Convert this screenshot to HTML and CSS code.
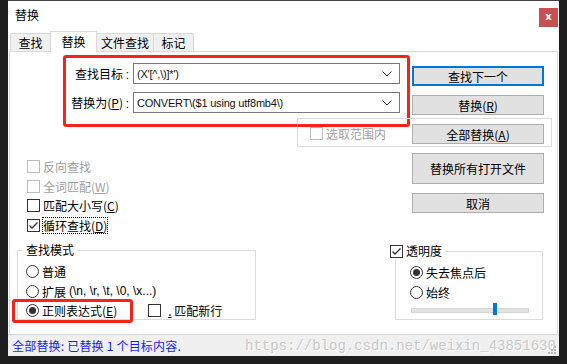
FILE: index.html
```html
<!DOCTYPE html>
<html lang="zh-CN">
<head>
    <meta charset="UTF-8">
    <title>替换</title>
    <link rel="stylesheet" href="styles.css">
</head>
<body>
    <div class="window">
        <div class="title-bar">
            <span class="title">替换</span>
            <span class="close-btn">x</span>
        </div>

        <div class="tabs">
            <span class="tab w40">查找</span>
            <span class="tab active w46">替换</span>
            <span class="tab w57">文件查找</span>
            <span class="tab w40">标记</span>
        </div>

        <div class="panel">
            <div class="left-top">
                <div class="highlight fields">
                    <div class="field-row">
                        <label class="field-label">查找目标 <span class="colon">:</span></label>
                        <div class="combo">
                            <span class="combo-text">(X'[^,\)]*')</span>
                            <svg class="chevron" width="10" height="6" viewBox="0 0 10 6"><polyline points="0.5,0.5 5,5 9.5,0.5" fill="none" stroke="#333" stroke-width="1"/></svg>
                        </div>
                    </div>
                    <div class="field-row">
                        <label class="field-label">替换为(<u>P</u>) <span class="colon">:</span></label>
                        <div class="combo">
                            <span class="combo-text">CONVERT\($1 using utf8mb4\)</span>
                            <svg class="chevron" width="10" height="6" viewBox="0 0 10 6"><polyline points="0.5,0.5 5,5 9.5,0.5" fill="none" stroke="#333" stroke-width="1"/></svg>
                        </div>
                    </div>
                </div>

                <div class="option-list">
                    <div class="option disabled"><span class="box"></span>反向查找</div>
                    <div class="option disabled"><span class="box"></span>全词匹配(<u>W</u>)</div>
                    <div class="option"><span class="box"></span>匹配大小写(<u>C</u>)</div>
                    <div class="option"><span class="box checked"><svg width="11" height="11" viewBox="0 0 11 11"><polyline points="1.5,5.5 4,8 9.5,2.5" fill="none" stroke="#333" stroke-width="1.3"/></svg></span><span class="focused">循环查找(<u>D</u>)</span></div>
                </div>
            </div>

            <div class="buttons">
                <button class="btn default">查找下一个</button>
                <button class="btn">替换(<u>R</u>)</button>
                <button class="btn">全部替换(<u>A</u>)</button>
                <button class="btn tall">替换所有打开文件</button>
                <button class="btn">取消</button>
            </div>

            <div class="range-frame">
                <div class="option disabled"><span class="box"></span>选取范围内</div>
            </div>

            <div class="bottom-row">
                <div class="group mode-group">
                    <span class="legend">查找模式</span>
                    <div class="group-body">
                        <div class="option"><span class="radio"></span>普通</div>
                        <div class="option"><span class="radio"></span>扩展 <span class="hint">(\n, \r, \t, \0, \x...)</span></div>
                        <div class="option regex-row">
                            <span class="highlight regex"><span class="radio on"></span>正则表达式(<u>E</u>)</span>
                            <span class="newline-opt"><span class="box"></span><u>.</u>&nbsp;匹配新行</span>
                        </div>
                    </div>
                </div>

                <div class="group alpha-group">
                    <span class="legend check-legend"><span class="box checked"><svg width="11" height="11" viewBox="0 0 11 11"><polyline points="1.5,5.5 4,8 9.5,2.5" fill="none" stroke="#333" stroke-width="1.3"/></svg></span>透明度</span>
                    <div class="group-body">
                        <div class="option"><span class="radio on"></span>失去焦点后</div>
                        <div class="option"><span class="radio"></span>始终</div>
                        <div class="slider">
                            <span class="slider-track"></span>
                            <span class="slider-thumb"></span>
                        </div>
                    </div>
                </div>
            </div>
        </div>

        <div class="status-bar">
            <span class="status-text">全部替换: 已替换 1 个目标内容.</span>
            <span class="watermark">https://blog.csdn.net/weixin_43851630</span>
            <svg class="grip" width="8" height="8" viewBox="0 0 8 8">
                <rect x="6" y="0" width="2" height="2" fill="#b8b8b8"/>
                <rect x="3" y="3" width="2" height="2" fill="#b8b8b8"/>
                <rect x="6" y="3" width="2" height="2" fill="#b8b8b8"/>
                <rect x="0" y="6" width="2" height="2" fill="#b8b8b8"/>
                <rect x="3" y="6" width="2" height="2" fill="#b8b8b8"/>
                <rect x="6" y="6" width="2" height="2" fill="#b8b8b8"/>
            </svg>
        </div>
    </div>
</body>
</html>
```

FILE: styles.css
```css
body {
    margin: 0;
    background-color: #1e1e1e;
    font-family: "Noto Sans CJK SC", "Noto Sans", sans-serif;
    font-size: 12px;
    color: #000;
}

.window {
    margin: 1px 0 0 8px;
    width: 551px;
    height: 355px;
    background-color: #fff;
    display: flex;
    flex-direction: column;
    box-shadow: 0 -1px 0 #444;
}

.title-bar {
    height: 30px;
    display: flex;
    justify-content: space-between;
    align-items: flex-start;
}

.title {
    margin: 6px 0 0 7px;
    line-height: 16px;
}

.close-btn {
    margin: 7px 1px 0 0;
    width: 19px;
    height: 19px;
    background-color: #c75050;
    color: #fff;
    font-family: "DejaVu Sans", sans-serif;
    font-weight: bold;
    font-size: 10px;
    line-height: 18px;
    text-align: center;
}

.tabs {
    height: 20px;
    display: flex;
    align-items: flex-end;
    padding-left: 2px;
    position: relative;
    z-index: 1;
}

.tab {
    height: 18px;
    line-height: 18px;
    text-align: center;
    background-color: #f0f0f0;
    border: 1px solid #d9d9d9;
    border-bottom: none;
    margin-right: -1px;
    box-sizing: border-box;
}

.tab.active {
    height: 21px;
    line-height: 19px;
    background-color: #fff;
    margin-bottom: -1px;
    position: relative;
    z-index: 2;
}

.w40 { width: 41px; }
.w46 { width: 47px; }
.w57 { width: 58px; }

.panel {
    flex: 1;
    margin: 0 1px 0 1px;
    border: 1px solid #d9d9d9;
    border-bottom: none;
    display: grid;
    grid-template-columns: 402px 132px;
    grid-template-rows: 183px auto;
    position: relative;
}

.highlight {
    border: 3px solid #f5231a;
    border-radius: 3px;
}

.fields {
    margin: 3px 0 0 53px;
    width: 347px;
    height: 72px;
    box-sizing: border-box;
    padding: 5px 7px 0 0;
    display: flex;
    flex-direction: column;
    gap: 8px;
}

.field-row {
    display: flex;
    align-items: center;
    height: 21px;
}

.field-label {
    width: 64px;
    text-align: right;
    margin-right: 3px;
    white-space: nowrap;
}

.colon {
    font-family: "Liberation Sans", sans-serif;
    padding-right: 1px;
}

.combo {
    flex: 1;
    height: 21px;
    box-sizing: border-box;
    border: 1px solid #7a7a7a;
    display: flex;
    align-items: center;
    justify-content: space-between;
    padding: 0 7px 0 3px;
}

.combo-text {
    font-family: "Liberation Sans", sans-serif;
    font-size: 11px;
    letter-spacing: -0.2px;
    color: #111;
}

.option-list {
    margin: 30px 0 0 17px;
}

.option {
    height: 19.5px;
    display: flex;
    align-items: center;
    white-space: nowrap;
}

.option.disabled {
    color: #a0a0a0;
}

.box {
    width: 13px;
    height: 13px;
    box-sizing: border-box;
    border: 1px solid #333;
    background-color: #fff;
    margin-right: 3px;
    display: inline-flex;
    align-items: center;
    justify-content: center;
    flex-shrink: 0;
}

.disabled .box {
    border-color: #bcbcbc;
}

.focused {
    outline: 1px dotted #000;
    outline-offset: 0;
    line-height: 15px;
}

.radio {
    width: 13px;
    height: 13px;
    box-sizing: border-box;
    border: 1px solid #333;
    border-radius: 50%;
    margin-right: 3px;
    display: inline-flex;
    align-items: center;
    justify-content: center;
    flex-shrink: 0;
}

.radio.on::after {
    content: "";
    width: 7px;
    height: 7px;
    border-radius: 50%;
    background-color: #333;
}

.buttons {
    padding-top: 14px;
    display: flex;
    flex-direction: column;
    gap: 9px;
    position: relative;
    z-index: 1;
}

.btn {
    height: 20px;
    margin: 0;
    padding: 0;
    background-color: #e1e1e1;
    border: 1px solid #adadad;
    font-family: "Noto Sans CJK SC", sans-serif;
    font-size: 12px;
    color: #000;
}

.btn.default {
    border: 2px solid #0078d7;
}

.btn.tall {
    height: 31px;
}

.range-frame {
    position: absolute;
    left: 287px;
    top: 66px;
    width: 255px;
    height: 29px;
    box-sizing: border-box;
    border: 1px solid #dcdcdc;
    padding: 5px 0 0 12px;
}

.bottom-row {
    grid-column: 1 / 3;
    display: flex;
    align-items: flex-start;
    padding: 15px 0 0 7px;
}

.group {
    border: 1px solid #dcdcdc;
    box-sizing: border-box;
}

.legend {
    display: table;
    height: 16px;
    line-height: 16px;
    margin: -9px 0 0 5px;
    padding: 0 3px;
    background-color: #fff;
}

.group-body {
    padding: 4px 0 0 8px;
}

.mode-group {
    width: 239px;
    height: 70px;
}

.hint {
    margin-left: 3px;
    font-family: "Liberation Sans", sans-serif;
    font-size: 12px;
}

.regex-row {
    margin-left: -14px;
}

.regex {
    display: flex;
    align-items: center;
    height: 18px;
    padding: 0 13px 0 11px;
    border-radius: 3px;
}

.newline-opt {
    display: flex;
    align-items: center;
    margin-left: 15px;
}

.newline-opt .box {
    margin-right: 7px;
}

.alpha-group {
    margin-left: 139px;
    margin-top: 1px;
    width: 148px;
    height: 69px;
}

.check-legend {
    display: flex;
    width: fit-content;
    align-items: center;
    margin: -9px 0 0 -6px;
    padding: 0 3px 0 0;
}

.alpha-group .group-body {
    padding: 4px 0 0 14px;
}

.slider {
    position: relative;
    height: 18px;
    width: 118px;
    margin-left: 1px;
}

.slider-track {
    position: absolute;
    left: 0;
    right: 0;
    top: 6px;
    height: 3px;
    background-color: #e3e3e3;
    border: 1px solid #d6d6d6;
}

.slider-thumb {
    position: absolute;
    left: 82px;
    top: 1px;
    width: 4px;
    height: 12px;
    background-color: #0078d7;
}

.status-bar {
    height: 22px;
    box-sizing: border-box;
    border-top: 1px solid #d7d7d7;
    background-color: #f0f0f0;
    display: flex;
    align-items: center;
    padding-left: 4px;
    position: relative;
}

.status-text {
    color: #1a1aff;
    width: 233px;
    flex-shrink: 0;
    letter-spacing: 0.2px;
}

.watermark {
    font-family: "Liberation Mono", monospace;
    font-size: 14px;
    color: #c8c8c8;
    text-shadow: 1px 1px 0 #fff;
    white-space: nowrap;
}

.grip {
    position: absolute;
    right: 3px;
    bottom: 2px;
}
```
